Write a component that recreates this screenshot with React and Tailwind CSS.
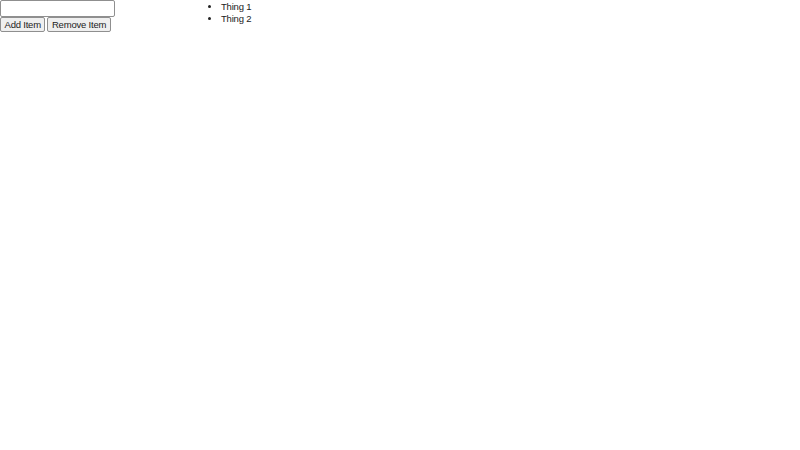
export default function App() {
  return (
    <div className="flex items-start bg-white" style={{ fontFamily: '"Liberation Sans", Arial, sans-serif' }}>
      <div className="flex w-[200px] flex-col items-start">
        <input className="h-[17px] w-[115px] rounded-[2px] border border-[#8f8f8f] bg-white px-[2px] text-[9px] outline-none" />
        <div className="flex gap-[2px]">
          <button className="h-[15px] rounded-[2px] border border-[#8f8f8f] bg-[#efefef] px-[3.5px] text-[9.5px] leading-none text-[#222] tracking-[-0.2px]">Add Item</button>
          <button className="h-[15px] rounded-[2px] border border-[#8f8f8f] bg-[#efefef] px-[3.5px] text-[9.5px] leading-none text-[#222] tracking-[-0.2px]">Remove Item</button>
        </div>
      </div>
      <ul className="list-disc pl-[21px] pt-[1px] text-[9.5px] leading-[12px] text-[#222] tracking-[-0.2px]">
        <li>Thing 1</li>
        <li>Thing 2</li>
      </ul>
    </div>
  );
}
